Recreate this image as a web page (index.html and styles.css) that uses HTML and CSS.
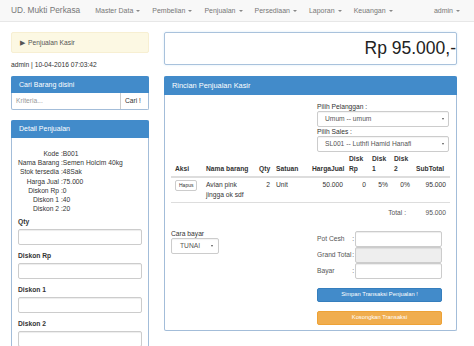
FILE: index.html
```html
<!DOCTYPE html>
<html lang="id">
<head>
<meta charset="utf-8">
<title>Penjualan Kasir</title>
<link rel="stylesheet" href="styles.css">
</head>
<body>
<nav class="navbar">
  <div class="brand">UD. Mukti Perkasa</div>
  <ul class="menu">
    <li>Master Data<span class="caret"></span></li>
    <li>Pembelian<span class="caret"></span></li>
    <li>Penjualan<span class="caret"></span></li>
    <li>Persediaan<span class="caret"></span></li>
    <li>Laporan<span class="caret"></span></li>
    <li>Keuangan<span class="caret"></span></li>
  </ul>
  <div class="user">admin<span class="caret"></span></div>
</nav>

<main class="page">
  <aside class="col-left">
    <div class="crumb"><span class="crumb-arrow">&#9654;</span>Penjualan Kasir</div>
    <div class="stamp">admin | 10-04-2016 07:03:42</div>

    <section class="panel search-panel">
      <div class="panel-heading">Cari Barang disini</div>
      <div class="input-group">
        <div class="ig-input">Kriteria...</div>
        <div class="ig-btn">Cari !</div>
      </div>
    </section>

    <section class="panel detail-panel">
      <div class="panel-heading heading-18">Detail Penjualan</div>
      <div class="detail-body">
        <div class="info">
          <span class="k">Kode</span><span class="v">:B001</span>
          <span class="k">Nama Barang</span><span class="v">:Semen Holcim 40kg</span>
          <span class="k">Stok tersedia</span><span class="v">:48Sak</span>
          <span class="k">Harga Jual</span><span class="v">:75.000</span>
          <span class="k">Diskon Rp</span><span class="v">:0</span>
          <span class="k">Diskon 1</span><span class="v">:40</span>
          <span class="k">Diskon 2</span><span class="v">:20</span>
        </div>
        <div class="field"><label>Qty</label><div class="input"></div></div>
        <div class="field"><label>Diskon Rp</label><div class="input"></div></div>
        <div class="field"><label>Diskon 1</label><div class="input"></div></div>
        <div class="field"><label>Diskon 2</label><div class="input"></div></div>
      </div>
    </section>
  </aside>

  <div class="col-right">
    <div class="total-box">Rp 95.000,-</div>

    <section class="panel main-panel">
      <div class="panel-heading heading-19">Rincian Penjualan Kasir</div>
      <div class="main-body">
        <div class="pick">
          <div class="pick-label">Pilih Pelanggan :</div>
          <div class="select"><span>Umum -- umum</span><span class="sel-caret"></span></div>
          <div class="pick-label">Pilih Sales :</div>
          <div class="select"><span>SL001 -- Luthfi Hamid Hanafi</span><span class="sel-caret"></span></div>
        </div>

        <table class="items">
          <colgroup>
            <col class="c-aksi"><col class="c-nama"><col class="c-qty"><col class="c-sat">
            <col class="c-harga"><col class="c-drp"><col class="c-d1"><col class="c-d2"><col class="c-sub">
          </colgroup>
          <thead>
            <tr>
              <th class="first">Aksi</th><th>Nama barang</th><th>Qty</th><th>Satuan</th><th>HargaJual</th>
              <th>Disk Rp</th><th>Disk 1</th><th>Disk 2</th><th>SubTotal</th>
            </tr>
          </thead>
          <tbody>
            <tr>
              <td class="first"><span class="btn-hapus">Hapus</span></td>
              <td>Avian pink jingga ok sdf</td>
              <td class="num">2</td>
              <td>Unit</td>
              <td class="num">50.000</td>
              <td class="num">0</td>
              <td class="num">5%</td>
              <td class="num">0%</td>
              <td class="num">95.000</td>
            </tr>
            <tr class="total-row">
              <td colspan="8" class="total-label">Total :</td>
              <td class="num">95.000</td>
            </tr>
          </tbody>
        </table>

        <div class="lower">
          <div class="pay">
            <div class="pay-label">Cara bayar</div>
            <div class="select select-pay"><span>TUNAI</span><span class="sel-caret"></span></div>
          </div>
          <div class="summary">
            <div class="sum-row"><span class="sum-label"><span>Pot Cesh</span><span>:</span></span><div class="input sum-input"></div></div>
            <div class="sum-row"><span class="sum-label"><span>Grand Total</span><span>:</span></span><div class="input sum-input disabled"></div></div>
            <div class="sum-row"><span class="sum-label"><span>Bayar</span><span>:</span></span><div class="input sum-input"></div></div>
            <div class="btn btn-primary">Simpan Transaksi Penjualan !</div>
            <div class="btn btn-warning">Kosongkan Transaksi</div>
          </div>
        </div>
      </div>
    </section>
  </div>
</main>
</body>
</html>
```

FILE: styles.css
```css
* { box-sizing: border-box; }
html, body { margin: 0; padding: 0; }
body {
  font-family: "Liberation Sans", Arial, sans-serif;
  font-size: 6.7px;
  line-height: 9.6px;
  color: #333;
  background: #fff;
  width: 474px;
  overflow: hidden;
}

/* navbar */
.navbar {
  height: 22px;
  background: #f8f8f8;
  border-bottom: 1px solid #e7e7e7;
  display: flex;
  align-items: center;
  padding: 0 14px 0 11px;
  color: #777;
}
.brand { font-size: 8.3px; color: #777; white-space: nowrap; }
.menu {
  display: flex;
  list-style: none;
  margin: 0 0 0 9px;
  padding: 0;
  font-size: 7px;
}
.menu li { padding: 0 6px; display: flex; align-items: center; white-space: nowrap; }
.caret {
  display: inline-block;
  width: 0; height: 0;
  border-top: 2px solid #888;
  border-left: 2px solid transparent;
  border-right: 2px solid transparent;
  margin-left: 3px;
}
.user { margin-left: auto; font-size: 7px; display: flex; align-items: center; }

/* page layout */
.page {
  display: flex;
  gap: 15px;
  padding: 10px 17px 0 11px;
  align-items: flex-start;
}
.col-left { width: 138px; flex: none; }
.col-right { flex: 1; min-width: 0; }

.crumb {
  height: 21px;
  background: #fcf8e3;
  border: 1px solid #f7efd2;
  border-radius: 2px;
  display: flex;
  align-items: center;
  padding-left: 8px;
  color: #555;
}
.crumb-arrow { font-size: 6.5px; margin-right: 3px; color: #555; }
.stamp { margin-top: 7px; height: 10px; line-height: 10px; }

/* panels */
.panel {
  border: 1px solid #a3bdd9;
  border-top: none;
  border-radius: 2px;
  background: #fff;
}
.panel-heading {
  background: #428bca;
  color: #fff;
  font-size: 7px;
  height: 17px;
  display: flex;
  align-items: center;
  padding-left: 8px;
  margin: 0 -1px;
  border-radius: 2px 2px 0 0;
}
.heading-18 { height: 18px; }
.heading-19 { height: 19px; font-size: 7.4px; }

.search-panel { margin-top: 6px; }
.input-group { display: flex; height: 16px; }
.ig-input {
  flex: 1;
  color: #999;
  padding-left: 4px;
  display: flex;
  align-items: center;
}
.ig-btn {
  width: 28px;
  border-left: 1px solid #ccc;
  background: #fff;
  display: flex;
  align-items: center;
  padding-left: 4px;
}

.detail-panel { margin-top: 10px; height: 260px; }
.detail-body { padding: 11px 6px 0 6px; }
.info {
  display: grid;
  grid-template-columns: 41px 1fr;
  column-gap: 2px;
  line-height: 9.2px;
}
.info .k { text-align: right; white-space: nowrap; }
.info .v { white-space: nowrap; }
.field { margin-top: 4px; margin-bottom: 6px; }
.field label { display: block; font-weight: bold; line-height: 10px; }
.input {
  height: 16px;
  border: 1px solid #ccc;
  border-radius: 2px;
  background: #fff;
  box-shadow: inset 0 1px 1px rgba(0,0,0,.075);
}
.field .input { margin-top: 2px; }

/* right column */
.total-box {
  height: 33px;
  border: 1px solid #a9c2dc;
  border-radius: 2px;
  display: flex;
  align-items: center;
  justify-content: flex-end;
  padding-right: 0;
  font-size: 17.5px;
  color: #222;
  white-space: nowrap;
  box-shadow: 0 0 2px rgba(102,175,233,.3);
}
.main-panel { margin-top: 11px; }
.main-body { padding: 7px 6px 5px 6px; }

.pick { padding-left: 146px; padding-right: 1px; }
.pick-label { line-height: 9px; height: 9px; }
.select {
  height: 16px;
  border: 1px solid #ccc;
  border-radius: 2px;
  display: flex;
  align-items: center;
  justify-content: space-between;
  padding: 0 4px 0 7px;
  color: #555;
  box-shadow: inset 0 1px 1px rgba(0,0,0,.05);
  white-space: nowrap;
}
.sel-caret {
  width: 0; height: 0;
  border-top: 2px solid #555;
  border-left: 1.5px solid transparent;
  border-right: 1.5px solid transparent;
}

.items {
  width: 100%;
  margin-top: 1px;
  border-collapse: collapse;
  table-layout: fixed;
}
.c-aksi { width: 33px; }
.c-nama { width: 53px; }
.c-qty { width: 17px; }
.c-sat { width: 36px; }
.c-harga { width: 37px; }
.c-drp { width: 23px; }
.c-d1 { width: 22px; }
.c-d2 { width: 22px; }
.c-sub { width: 36px; }
.items th {
  font-weight: bold;
  text-align: left;
  vertical-align: bottom;
  padding: 1px 2px 2px;
  line-height: 10px;
  border-bottom: 2px solid #ddd;
}
.items td {
  vertical-align: top;
  padding: 2px 2px;
  line-height: 10px;
  border-bottom: 1px solid #ddd;
}
.items .first { padding-left: 4px; }
.items td.num { text-align: right; padding-right: 4px; }
.btn-hapus {
  display: inline-block;
  border: 1px solid #ccc;
  border-radius: 2px;
  font-size: 5px;
  line-height: 9px;
  padding: 0 3px;
  background: #fff;
  color: #333;
}
.total-row td { border-bottom: none; padding-top: 5px; padding-bottom: 5px; color: #555; }
.total-row td.total-label { text-align: right; padding-right: 8px; }

.lower { display: flex; margin-top: 6px; }
.pay { width: 146px; flex: none; }
.pay-label { line-height: 9px; height: 9px; }
.select-pay { width: 48px; padding-left: 8px; padding-right: 5px; }
.summary { width: 125px; padding-top: 2px; }
.sum-row { display: flex; align-items: center; height: 16px; }
.sum-label {
  width: 38px;
  flex: none;
  display: flex;
  justify-content: space-between;
  padding-right: 1px;
  color: #555;
  white-space: nowrap;
}
.sum-input { flex: 1; }
.sum-input.disabled { background: #eee; }
.btn {
  height: 14px;
  border-radius: 2px;
  font-size: 5.8px;
  color: #fff;
  display: flex;
  align-items: center;
  justify-content: center;
  white-space: nowrap;
}
.btn-primary { margin-top: 9px; background: #428bca; border: 1px solid #357ebd; }
.btn-warning { margin-top: 9px; background: #f0ad4e; border: 1px solid #eea236; }
```
